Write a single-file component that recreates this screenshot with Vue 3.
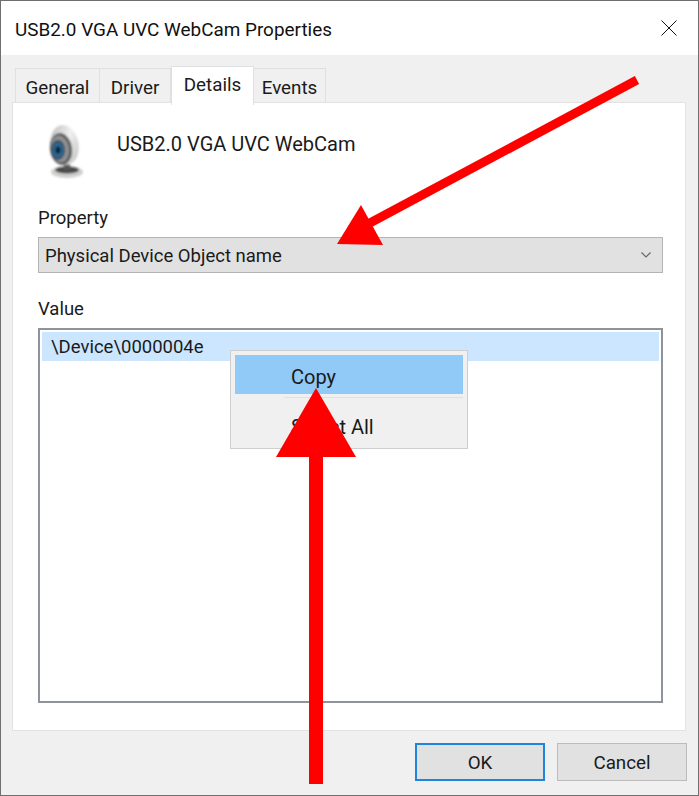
<script setup>
const tabs = [
  { name: 'General', active: false, cls: 'w-general' },
  { name: 'Driver', active: false, cls: 'w-driver' },
  { name: 'Details', active: true, cls: 'w-details' },
  { name: 'Events', active: false, cls: 'w-events' }
]
</script>

<template>
  <div class="window">
    <header class="titlebar">
      <span class="title">USB2.0 VGA UVC WebCam Properties</span>
      <svg class="close" width="16" height="16" viewBox="0 0 16 16">
        <path d="M0.5 0.5L15.5 15.5M15.5 0.5L0.5 15.5" stroke="#111" stroke-width="1" fill="none" />
      </svg>
    </header>
    <main class="body">
      <nav class="tabs">
        <div v-for="t in tabs" :key="t.name" class="tab" :class="[t.cls, { active: t.active }]">{{ t.name }}</div>
      </nav>
      <section class="panel">
        <div class="device">
          <svg class="cam" width="44" height="60" viewBox="0 0 44 60">
            <defs>
              <filter id="soft" x="-20%" y="-20%" width="140%" height="140%"><feGaussianBlur stdDeviation="0.8" /></filter>
              <radialGradient id="lens" cx="50%" cy="50%" r="50%">
                <stop offset="0" stop-color="#14304a" />
                <stop offset="0.55" stop-color="#2b6f9f" />
                <stop offset="1" stop-color="#3b444c" />
              </radialGradient>
              <linearGradient id="shell" x1="0" y1="0" x2="1" y2="1">
                <stop offset="0" stop-color="#b5b5b5" />
                <stop offset="0.5" stop-color="#f0f0f0" />
                <stop offset="1" stop-color="#bcbcbc" />
              </linearGradient>
            </defs>
            <g filter="url(#soft)">
              <ellipse cx="23" cy="48" rx="16" ry="6" fill="#cfcfcf" />
              <ellipse cx="23" cy="46" rx="12" ry="3.4" fill="#4a4a4a" />
              <rect x="20" y="38" width="6" height="8" fill="#555" />
              <ellipse cx="20.5" cy="21" rx="14" ry="20" fill="url(#shell)" transform="rotate(-10 20.5 21)" />
              <ellipse cx="17" cy="25" rx="11" ry="16" fill="#5a5c5e" transform="rotate(-8 17 25)" />
              <ellipse cx="16" cy="25" rx="9" ry="13.5" fill="#8f9193" transform="rotate(-8 16 25)" />
              <ellipse cx="14" cy="26" rx="7" ry="10" fill="url(#lens)" />
              <ellipse cx="14" cy="26" rx="2.4" ry="3.6" fill="#0d2233" />
            </g>
          </svg>
          <span class="device-name">USB2.0 VGA UVC WebCam</span>
        </div>
        <label class="field-label prop">Property</label>
        <div class="combo">
          <span>Physical Device Object name</span>
          <svg width="10" height="6" viewBox="0 0 10 6"><path d="M0.5 0.5L5 5L9.5 0.5" stroke="#666" stroke-width="1.2" fill="none" /></svg>
        </div>
        <label class="field-label val">Value</label>
        <div class="list">
          <div class="row">\Device\0000004e</div>
          <div class="menu">
            <div class="item hot">Copy</div>
            <div class="sep"></div>
            <div class="item">Select All</div>
          </div>
        </div>
      </section>
      <footer class="buttons">
        <div class="btn default">OK</div>
        <div class="btn">Cancel</div>
      </footer>
    </main>
    <svg class="arrows" width="699" height="796" viewBox="0 0 699 796">
      <path d="M637 80L368 224" stroke="#f00" stroke-width="9" fill="none" />
      <path d="M337 244L361 205L383 245Z" fill="#f00" />
      <path d="M309 784V450H323V784Z" fill="#f00" />
      <path d="M316 388L356 457H276Z" fill="#f00" />
    </svg>
  </div>
</template>

<style>
html, body { margin: 0; background: #fff; }
</style>

<style scoped>
.window {
  position: relative;
  box-sizing: border-box;
  width: 699px;
  height: 796px;
  border: 1px solid #6f6f6f;
  display: flex;
  flex-direction: column;
  font-family: Roboto, "Open Sans", sans-serif;
  color: #1a1a1a;
  overflow: hidden;
}
.titlebar {
  height: 54px;
  flex: none;
  background: #fff;
  display: flex;
  align-items: center;
  justify-content: space-between;
  padding: 0 21px 0 14px;
}
.title { font-size: 18.9px; color: #111; padding-top: 2px; }
.body {
  flex: 1;
  background: #f0f0f0;
  padding: 11px 11px 0 11px;
  display: flex;
  flex-direction: column;
}
.tabs {
  display: flex;
  padding-left: 3px;
  height: 39px;
  align-items: flex-end;
  margin-bottom: -3px;
  position: relative;
  z-index: 1;
}
.tab {
  box-sizing: border-box;
  height: 34px;
  margin-bottom: 3px;
  border: 1px solid #e0e0e0;
  border-bottom: none;
  border-left: none;
  display: flex;
  align-items: center;
  justify-content: center;
  font-size: 18.8px;
  padding-top: 5px;
}
.w-general { width: 85px; border-left: 1px solid #e0e0e0; }
.w-driver { width: 71px; }
.w-details { width: 83px; }
.w-events { width: 72px; }
.tab.active {
  height: 39px;
  margin-bottom: 0;
  background: #fff;
  border-left: 1px solid #e0e0e0;
  padding-top: 0;
  padding-bottom: 2px;
}
.panel {
  box-sizing: border-box;
  width: 674px;
  height: 629px;
  background: #fff;
  border: 1px solid #e2e2e2;
  padding: 0 22px 0 25px;
  display: flex;
  flex-direction: column;
}
.device {
  height: 93px;
  flex: none;
  display: flex;
  align-items: flex-start;
}
.cam { margin: 21px 0 0 6px; flex: none; }
.device-name { margin: 29px 0 0 29px; font-size: 20px; }
.field-label { font-size: 18.5px; line-height: 26px; display: block; }
.prop { margin-top: 9px; }
.combo {
  box-sizing: border-box;
  height: 36px;
  margin-top: 6px;
  background: #e1e1e1;
  border: 1px solid #b4b4b4;
  display: flex;
  align-items: center;
  justify-content: space-between;
  padding: 0 11px 0 6px;
  font-size: 18.5px;
}
.combo span { padding-top: 2px; }
.val { margin-top: 23px; }
.list {
  position: relative;
  box-sizing: border-box;
  height: 375px;
  margin-top: 6px;
  border: 2px solid #8f949c;
  padding: 2px;
}
.row {
  height: 29px;
  background: #cce6ff;
  font-size: 18.5px;
  line-height: 31px;
  padding-left: 9px;
}
.menu {
  position: absolute;
  left: 190px;
  top: 20px;
  box-sizing: border-box;
  width: 238px;
  height: 99px;
  background: #f0f0f0;
  border: 1px solid #cfcfcf;
  padding: 4px 4px 0;
  font-size: 20px;
}
.item {
  height: 39px;
  line-height: 42px;
  padding-left: 56px;
}
.item.hot { background: #91c9f7; line-height: 44px; }
.sep { height: 1px; background: #e0e0e0; margin: 3px 0 8px 49px; }
.buttons {
  display: flex;
  justify-content: flex-end;
  gap: 12px;
  padding-top: 12px;
}
.btn {
  box-sizing: border-box;
  width: 130px;
  height: 38px;
  background: #e1e1e1;
  border: 1px solid #bcbcbc;
  display: flex;
  align-items: center;
  justify-content: center;
  font-size: 18.8px;
  padding-top: 2px;
}
.btn.default { border: 2px solid #1f84dc; }
.arrows { position: absolute; left: -1px; top: -1px; pointer-events: none; }
</style>
